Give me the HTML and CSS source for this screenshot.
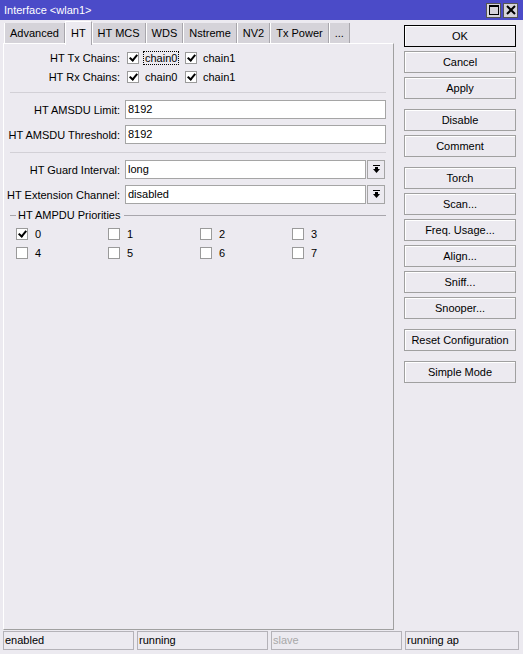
FILE: index.html
```html
<!DOCTYPE html>
<html lang="en">
<head>
  <meta charset="UTF-8">
  <title>Interface &lt;wlan1&gt;</title>
  <link rel="stylesheet" href="styles.css">
</head>
<body>
  <div class="titlebar">
    <span class="title">Interface &lt;wlan1&gt;</span>
    <div class="winbtns">
      <span class="winbtn"><svg width="10" height="10" viewBox="0 0 10 10"><rect x="0.5" y="0.5" width="9" height="9" fill="none" stroke="#000"/><rect x="0" y="0" width="10" height="2" fill="#000"/></svg></span>
      <span class="winbtn"><svg width="10" height="10" viewBox="0 0 10 10"><path d="M1 1 L9 9 M9 1 L1 9" stroke="#000" stroke-width="2"/></svg></span>
    </div>
  </div>

  <div class="main">
    <div class="left">
      <div class="tabs">
        <span class="tab">Advanced</span>
        <span class="tab active">HT</span>
        <span class="tab">HT MCS</span>
        <span class="tab">WDS</span>
        <span class="tab">Nstreme</span>
        <span class="tab">NV2</span>
        <span class="tab">Tx Power</span>
        <span class="tab">...</span>
      </div>
      <div class="panel">
        <div class="section first">
          <div class="row">
            <label class="lbl">HT Tx Chains:</label>
            <span class="check-item"><span class="cb on"></span><span class="cb-text focus">chain0</span></span>
            <span class="check-item"><span class="cb on"></span><span class="cb-text">chain1</span></span>
          </div>
          <div class="row">
            <label class="lbl">HT Rx Chains:</label>
            <span class="check-item"><span class="cb on"></span><span class="cb-text">chain0</span></span>
            <span class="check-item"><span class="cb on"></span><span class="cb-text">chain1</span></span>
          </div>
        </div>
        <div class="sep"></div>
        <div class="section">
          <div class="row">
            <label class="lbl">HT AMSDU Limit:</label>
            <span class="field">8192</span>
          </div>
          <div class="row gap">
            <label class="lbl">HT AMSDU Threshold:</label>
            <span class="field">8192</span>
          </div>
        </div>
        <div class="sep sep2"></div>
        <div class="section">
          <div class="row">
            <label class="lbl">HT Guard Interval:</label>
            <span class="field select">long</span>
            <span class="drop"><svg width="9" height="9" viewBox="0 0 9 9"><rect x="1" y="0" width="7" height="1" fill="#000"/><path d="M3 2 H6 V4 H8 L4.5 8 L1 4 H3 Z" fill="#000"/></svg></span>
          </div>
          <div class="row gap">
            <label class="lbl">HT Extension Channel:</label>
            <span class="field select">disabled</span>
            <span class="drop"><svg width="9" height="9" viewBox="0 0 9 9"><rect x="1" y="0" width="7" height="1" fill="#000"/><path d="M3 2 H6 V4 H8 L4.5 8 L1 4 H3 Z" fill="#000"/></svg></span>
          </div>
        </div>
        <div class="group-head"><span>HT AMPDU Priorities</span></div>
        <div class="prio">
          <span class="check-item"><span class="cb on"></span><span class="cb-text">0</span></span>
          <span class="check-item"><span class="cb"></span><span class="cb-text">1</span></span>
          <span class="check-item"><span class="cb"></span><span class="cb-text">2</span></span>
          <span class="check-item"><span class="cb"></span><span class="cb-text">3</span></span>
          <span class="check-item"><span class="cb"></span><span class="cb-text">4</span></span>
          <span class="check-item"><span class="cb"></span><span class="cb-text">5</span></span>
          <span class="check-item"><span class="cb"></span><span class="cb-text">6</span></span>
          <span class="check-item"><span class="cb"></span><span class="cb-text">7</span></span>
        </div>
      </div>
    </div>

    <div class="side">
      <button class="btn default">OK</button>
      <button class="btn">Cancel</button>
      <button class="btn">Apply</button>
      <button class="btn group">Disable</button>
      <button class="btn">Comment</button>
      <button class="btn group">Torch</button>
      <button class="btn">Scan...</button>
      <button class="btn">Freq. Usage...</button>
      <button class="btn">Align...</button>
      <button class="btn">Sniff...</button>
      <button class="btn">Snooper...</button>
      <button class="btn group">Reset Configuration</button>
      <button class="btn group">Simple Mode</button>
    </div>
  </div>

  <div class="status">
    <span class="cell">enabled</span>
    <span class="cell">running</span>
    <span class="cell dim">slave</span>
    <span class="cell">running ap</span>
  </div>
</body>
</html>
```

FILE: styles.css
```css
body {
  margin: 0;
  width: 523px;
  height: 654px;
  background: #eceaf0;
  font-family: "Liberation Sans", Arial, sans-serif;
  font-size: 11px;
  color: #000;
  overflow: hidden;
}

.titlebar {
  height: 20px;
  background: #4b4bc8;
  color: #fff;
  display: flex;
  align-items: center;
  justify-content: space-between;
  padding: 0 5px 0 4px;
}

.winbtns {
  display: flex;
  gap: 2px;
}

.winbtn {
  width: 13px;
  height: 13px;
  background: #d6d4da;
  border: 1px solid #555;
  display: flex;
  align-items: center;
  justify-content: center;
}

.main {
  display: flex;
  height: 610px;
}

.left {
  margin-left: 3px;
  width: 391px;
  display: flex;
  flex-direction: column;
}

.tabs {
  height: 23px;
  padding-top: 1px;
  padding-left: 1px;
  display: flex;
  align-items: flex-end;
  position: relative;
  z-index: 1;
}

.tab {
  height: 20px;
  line-height: 20px;
  padding: 0 5px;
  background: #d5d3d9;
  border-left: 1px solid #fff;
  border-right: 1px solid #a8a6ac;
  margin-bottom: 1px;
}

.tab.active {
  height: 23px;
  line-height: 22px;
  background: #eceaf0;
  border-top: 1px solid #fff;
  margin-bottom: -1px;
}

.panel {
  flex: 1;
  margin-top: -1px;
  border-top: 1px solid #fff;
  border-left: 1px solid #fff;
  border-right: 1px solid #a0a0a0;
  border-bottom: 1px solid #a0a0a0;
}

.section.first {
  padding-top: 4px;
}

.row {
  display: flex;
  align-items: center;
  height: 19px;
}

.row.gap {
  margin-top: 6px;
}

.lbl {
  width: 116px;
  text-align: right;
  margin-right: 5px;
  white-space: nowrap;
}

.check-item {
  display: inline-flex;
  align-items: center;
  width: 58px;
}

.row .check-item:first-of-type {
  margin-left: 2px;
}

.cb {
  box-sizing: border-box;
  width: 12px;
  height: 12px;
  background: #fff;
  border: 1px solid #9a9a9a;
  position: relative;
  flex: none;
}

.cb.on::after {
  content: "";
  position: absolute;
  left: 3px;
  top: 0px;
  width: 3px;
  height: 6px;
  border-right: 2px solid #000;
  border-bottom: 2px solid #000;
  transform: rotate(40deg);
}

.cb-text {
  margin-left: 4px;
  padding: 0 1px;
  border: 1px solid transparent;
}

.cb-text.focus {
  border: 1px dotted #000;
}

.sep {
  height: 1px;
  background: #d2d0d6;
  margin: 6px 0 7px 6px;
  width: 376px;
}

.sep.sep2 {
  margin-top: 8px;
}

.field {
  box-sizing: border-box;
  width: 261px;
  height: 19px;
  line-height: 17px;
  background: #fff;
  border: 1px solid #a5a5a5;
  padding-left: 2px;
}

.field.select {
  width: 241px;
}

.drop {
  box-sizing: border-box;
  width: 18px;
  height: 19px;
  margin-left: 1px;
  border: 1px solid #a5a5a5;
  background: #eceaf0;
  display: flex;
  align-items: center;
  justify-content: center;
}

.group-head {
  display: flex;
  align-items: center;
  width: 376px;
  margin: 4px 0 0 6px;
  height: 14px;
}

.group-head::before {
  content: "";
  width: 6px;
  height: 1px;
  background: #a8a6ac;
}

.group-head::after {
  content: "";
  flex: 1;
  height: 1px;
  background: #a8a6ac;
}

.group-head span {
  padding: 0 4px 0 2px;
}

.prio {
  display: grid;
  grid-template-columns: repeat(4, 92px);
  grid-auto-rows: 19px;
  padding-left: 12px;
  margin-top: 2px;
}

.prio .check-item {
  width: auto;
}

.prio .cb-text {
  margin-left: 5px;
}

.side {
  margin-left: 10px;
  width: 112px;
  padding-top: 5px;
  display: flex;
  flex-direction: column;
}

.btn {
  box-sizing: border-box;
  height: 22px;
  margin-bottom: 4px;
  background: #eceaf0;
  border: 1px solid #a0a0a0;
  box-shadow: inset 1px 1px 0 #fff;
  font-family: "Liberation Sans", Arial, sans-serif;
  font-size: 11px;
  color: #000;
  padding: 0;
}

.btn.group {
  margin-top: 6px;
}

.btn.default {
  border: 1px solid #000;
}

.status {
  display: grid;
  grid-template-columns: 131px 131px 131px 114px;
  column-gap: 3px;
  padding-left: 3px;
  margin-top: 1px;
}

.cell {
  box-sizing: border-box;
  height: 19px;
  line-height: 17px;
  border: 1px solid #b4b2b8;
  padding-left: 1px;
}

.cell.dim {
  color: #a8a8a8;
}
```
